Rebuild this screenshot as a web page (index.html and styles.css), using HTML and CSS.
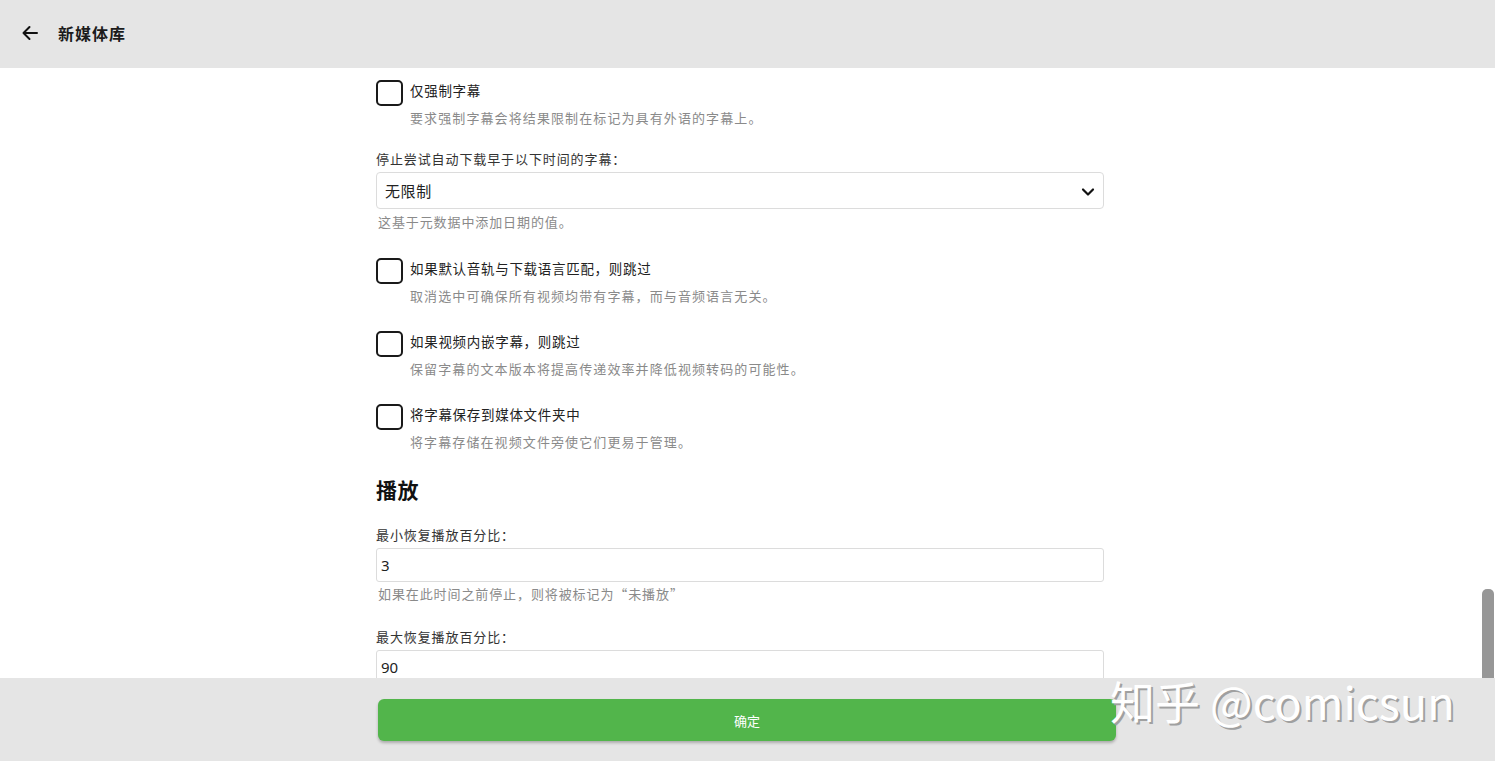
FILE: index.html
```html
<!DOCTYPE html>
<html lang="zh-CN">
<head>
<meta charset="utf-8">
<title>新媒体库</title>
<link rel="stylesheet" href="styles.css">
</head>
<body>
<div class="app">
  <header class="topbar">
    <button class="back" aria-label="返回">
      <svg width="18" height="18" viewBox="0 0 18 18"><path d="M16 9H2.5M8.5 3L2.5 9l6 6" fill="none" stroke="#111" stroke-width="2" stroke-linecap="round" stroke-linejoin="round"/></svg>
    </button>
    <h1 class="title">新媒体库</h1>
  </header>

  <main class="scroller">
    <div class="form">
      <div class="check-item tight">
        <div class="check-row"><span class="box"></span><span class="check-label">仅强制字幕</span></div>
        <div class="desc">要求强制字幕会将结果限制在标记为具有外语的字幕上。</div>
      </div>

      <div class="field wide">
        <div class="field-label">停止尝试自动下载早于以下时间的字幕：</div>
        <div class="select">
          <span>无限制</span>
          <svg class="chev" width="14" height="10" viewBox="0 0 14 10"><path d="M2 2.5l5 5 5-5" fill="none" stroke="#111" stroke-width="2.2" stroke-linecap="round" stroke-linejoin="round"/></svg>
        </div>
        <div class="help">这基于元数据中添加日期的值。</div>
      </div>

      <div class="check-item">
        <div class="check-row"><span class="box"></span><span class="check-label">如果默认音轨与下载语言匹配，则跳过</span></div>
        <div class="desc">取消选中可确保所有视频均带有字幕，而与音频语言无关。</div>
      </div>

      <div class="check-item">
        <div class="check-row"><span class="box"></span><span class="check-label">如果视频内嵌字幕，则跳过</span></div>
        <div class="desc">保留字幕的文本版本将提高传递效率并降低视频转码的可能性。</div>
      </div>

      <div class="check-item last">
        <div class="check-row"><span class="box"></span><span class="check-label">将字幕保存到媒体文件夹中</span></div>
        <div class="desc">将字幕存储在视频文件旁使它们更易于管理。</div>
      </div>

      <h2 class="section">播放</h2>

      <div class="field">
        <div class="field-label">最小恢复播放百分比：</div>
        <div class="input">3</div>
        <div class="help">如果在此时间之前停止，则将被标记为“未播放”</div>
      </div>

      <div class="field">
        <div class="field-label">最大恢复播放百分比：</div>
        <div class="input">90</div>
      </div>
    </div>
    <div class="thumb"></div>
  </main>

  <footer class="footer">
    <button class="ok">确定</button>
    <div class="watermark">知乎 @comicsun</div>
  </footer>
</div>
</body>
</html>
```
FILE: styles.css
```css
* { box-sizing: border-box; }
html, body { margin: 0; padding: 0; }
body {
  font-family: "Noto Sans CJK SC", "Noto Sans", sans-serif;
  color: #222;
  background: #fff;
  overflow: hidden;
}
.app {
  width: 1495px;
  height: 761px;
  display: flex;
  flex-direction: column;
  position: relative;
}
.topbar {
  height: 68px;
  flex: none;
  background: #e5e5e5;
  display: flex;
  align-items: center;
  padding-left: 20px;
  padding-bottom: 2px;
}
.back {
  border: 0;
  background: none;
  padding: 0;
  width: 20px;
  height: 20px;
  display: flex;
  align-items: center;
  justify-content: center;
  margin-right: 18px;
}
.title {
  margin: 0;
  font-size: 16px;
  font-weight: 700;
  color: #1c1c1c;
  letter-spacing: 1px;
}
.scroller {
  flex: 1;
  overflow: hidden;
  position: relative;
}
.form {
  width: 728px;
  margin-left: 376px;
  padding-top: 12px;
}
.check-item { margin-bottom: 26px; }
.check-item.tight { margin-bottom: 23px; }
.check-item.last { margin-bottom: 24px; }
.check-row {
  display: flex;
  align-items: flex-start;
}
.box {
  width: 27px;
  height: 26px;
  border: 2px solid #1a1a1a;
  border-radius: 5px;
  flex: none;
}
.check-label {
  margin-left: 7px;
  font-size: 13.5px;
  line-height: 20px;
  letter-spacing: 0.7px;
  color: #222;
}
.desc {
  margin-left: 34px;
  margin-top: 3px;
  font-size: 13px;
  line-height: 18px;
  letter-spacing: 1.1px;
  color: #8a8a8a;
}
.field { margin-bottom: 25px; }
.field.wide { margin-bottom: 27px; }
.field-label {
  font-size: 13px;
  line-height: 18px;
  letter-spacing: 0.9px;
  color: #333;
  margin-bottom: 4px;
}
.select {
  height: 37px;
  border: 1px solid #dcdcdc;
  border-radius: 4px;
  display: flex;
  align-items: center;
  justify-content: space-between;
  padding: 0 8px 0 8px;
  font-size: 15px;
  letter-spacing: 0.6px;
  color: #222;
}
.chev { margin-top: 2px; }
.help {
  margin-top: 4px;
  margin-left: 2px;
  font-size: 13px;
  line-height: 18px;
  letter-spacing: 0.9px;
  color: #8a8a8a;
}
.input {
  height: 34px;
  border: 1px solid #dcdcdc;
  border-radius: 3px;
  display: flex;
  align-items: center;
  padding-left: 4px;
  font-family: "Noto Sans", sans-serif;
  font-size: 15px;
  color: #222;
}
.field .input + .help { margin-top: 3px; }
.section {
  margin: 0 0 23px;
  font-size: 21px;
  line-height: 28px;
  font-weight: 700;
  letter-spacing: 0.5px;
  color: #111;
}
.thumb {
  position: absolute;
  right: 1px;
  top: 521px;
  width: 12px;
  height: 120px;
  background: #979797;
  border-radius: 5px;
}
.footer {
  height: 83px;
  flex: none;
  background: #e5e5e5;
  position: relative;
  padding-top: 21px;
}
.ok {
  display: block;
  margin-left: 378px;
  width: 738px;
  height: 42px;
  border: 0;
  border-radius: 6px;
  background: #52b54b;
  color: #fff;
  font-family: "Noto Sans CJK SC", sans-serif;
  font-size: 13px;
  box-shadow: 0 2px 3px rgba(0,0,0,0.25);
}
.watermark {
  position: absolute;
  left: 1110px;
  top: -5px;
  font-family: "Noto Sans CJK SC", "Noto Sans", sans-serif;
  font-size: 45px;
  line-height: 56px;
  color: #fff;
  text-shadow: 2px 2px 0 #a0a0a0;
  white-space: nowrap;
}
```
